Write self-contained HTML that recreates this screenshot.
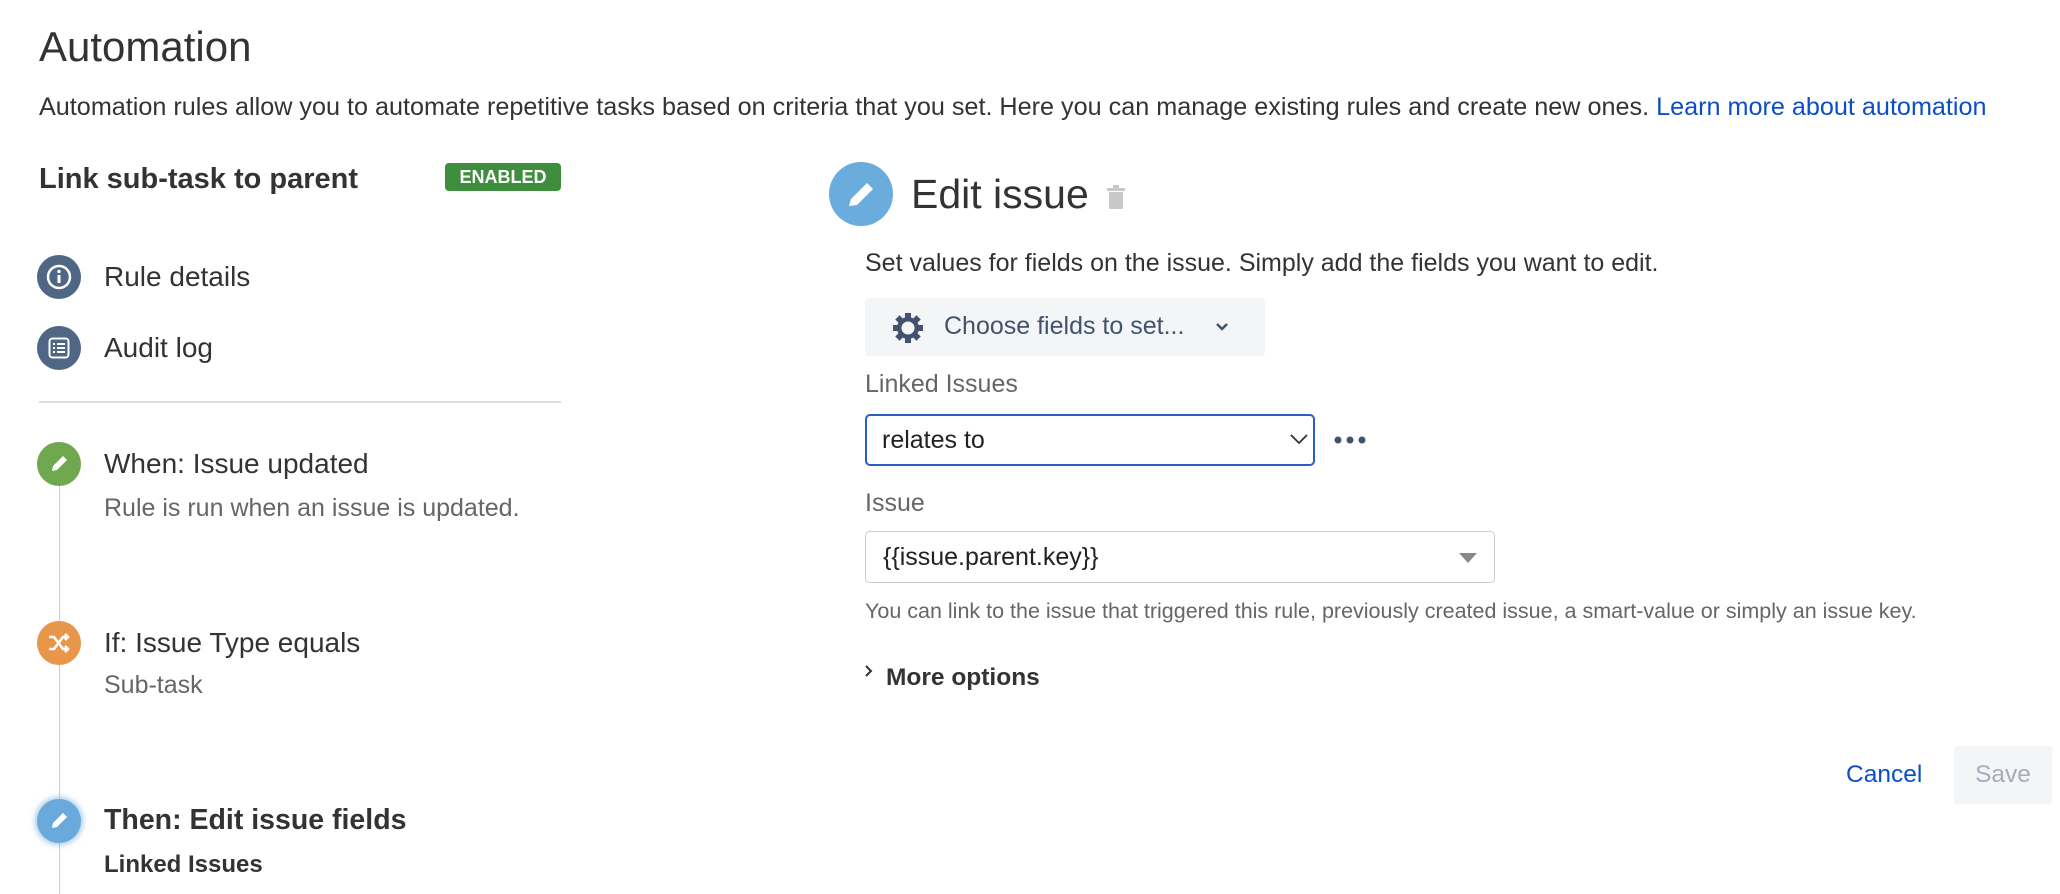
<!DOCTYPE html>
<html><head><meta charset="utf-8"><style>
*{margin:0;padding:0;box-sizing:border-box}
body{width:2060px;height:894px;background:#fff;font-family:"Liberation Sans",Arial,sans-serif;color:#333;position:relative;overflow:hidden}
.a{position:absolute;white-space:nowrap}
.circ{position:absolute;border-radius:50%}
</style></head><body>
<div class="a" style="left:39px;top:23px;font-size:42px;color:#333">Automation</div>
<div class="a" style="left:39px;top:93px;font-size:25.2px;color:#333">Automation rules allow you to automate repetitive tasks based on criteria that you set. Here you can manage existing rules and create new ones. <span style="color:#0b4fc8">Learn more about automation</span></div>

<div class="a" style="left:39px;top:163px;font-size:29px;font-weight:bold;color:#333">Link sub-task to parent</div>
<div class="a" style="left:445px;top:163px;width:116px;height:28px;background:#3e8e3e;border-radius:4px;color:#fff;font-weight:bold;font-size:18px;text-align:center;line-height:28px">ENABLED</div>

<div class="circ" style="left:37px;top:255px;width:44px;height:44px;background:#506685"></div>
<svg class="a" style="left:37px;top:255px" width="44" height="44"><circle cx="22" cy="22" r="11" fill="none" stroke="#fff" stroke-width="2.5"/><rect x="20.5" y="20" width="3" height="8" fill="#fff"/><circle cx="22" cy="16.5" r="1.7" fill="#fff"/></svg>
<div class="a" style="left:104px;top:261px;font-size:28px">Rule details</div>
<div class="circ" style="left:37px;top:326px;width:44px;height:44px;background:#506685"></div>
<svg class="a" style="left:37px;top:326px" width="44" height="44"><rect x="12.5" y="12.5" width="19" height="19" rx="3" fill="none" stroke="#fff" stroke-width="2"/><g fill="#fff"><rect x="16" y="17" width="2" height="2"/><rect x="20" y="17" width="8" height="2"/><rect x="16" y="21" width="2" height="2"/><rect x="20" y="21" width="8" height="2"/><rect x="16" y="25" width="2" height="2"/><rect x="20" y="25" width="8" height="2"/></g></svg>
<div class="a" style="left:104px;top:332px;font-size:28px">Audit log</div>
<div class="a" style="left:39px;top:401px;width:522px;height:2px;background:#ddd"></div>

<div class="a" style="left:59px;top:470px;width:1px;height:424px;background:#ccc"></div>
<div class="circ" style="left:37px;top:442px;width:44px;height:44px;background:#6fa84f"></div>
<svg class="a" style="left:37px;top:442px" width="44" height="44"><path d="M15 29 L16 24 L26 14 L30 18 L20 28 Z" fill="#fff"/></svg>
<div class="a" style="left:104px;top:448px;font-size:28px">When: Issue updated</div>
<div class="a" style="left:104px;top:494px;font-size:25px;color:#666">Rule is run when an issue is updated.</div>

<div class="circ" style="left:37px;top:621px;width:44px;height:44px;background:#e8964a"></div>
<svg class="a" style="left:37px;top:621px" width="44" height="44" fill="none" stroke="#fff" stroke-width="2.5"><path d="M12 16h5l9 12h5M12 28h5l9-12h5M28 13l3 3-3 3M28 25l3 3-3 3"/></svg>
<div class="a" style="left:104px;top:627px;font-size:28px">If: Issue Type equals</div>
<div class="a" style="left:104px;top:671px;font-size:25px;color:#666">Sub-task</div>

<div class="circ" style="left:37px;top:799px;width:44px;height:44px;background:#6aa9dc;box-shadow:0 0 6px 2px rgba(106,169,220,.6)"></div>
<svg class="a" style="left:37px;top:799px" width="44" height="44"><path d="M15 29 L16 24 L26 14 L30 18 L20 28 Z" fill="#fff"/></svg>
<div class="a" style="left:104px;top:804px;font-size:28.5px;font-weight:bold">Then: Edit issue fields</div>
<div class="a" style="left:104px;top:851px;font-size:24px;font-weight:bold">Linked Issues</div>

<div class="circ" style="left:829px;top:162px;width:64px;height:64px;background:#6aaddc"></div>
<svg class="a" style="left:829px;top:162px" width="64" height="64"><path d="M20 44 L22 37 L38 21 L44 27 L28 43 Z" fill="#fff"/></svg>
<div class="a" style="left:911px;top:171px;font-size:41px;color:#333">Edit issue</div>
<svg class="a" style="left:1106px;top:184px" width="20" height="26"><rect x="1" y="4" width="18" height="3" fill="#c8c8c8"/><rect x="7" y="1" width="6" height="3" fill="#c8c8c8"/><rect x="3" y="8" width="14" height="17" rx="1" fill="#c8c8c8"/></svg>
<div class="a" style="left:865px;top:249px;font-size:25px;color:#333">Set values for fields on the issue. Simply add the fields you want to edit.</div>

<div class="a" style="left:865px;top:298px;width:400px;height:58px;background:#f4f5f7;border-radius:4px"></div>
<svg class="a" style="left:892px;top:312px" width="32" height="32"><g fill="#42526e"><circle cx="16" cy="16" r="11"/><g transform="translate(16 16)"><rect x="-3" y="-15" width="6" height="30"/><rect x="-3" y="-15" width="6" height="30" transform="rotate(45)"/><rect x="-3" y="-15" width="6" height="30" transform="rotate(90)"/><rect x="-3" y="-15" width="6" height="30" transform="rotate(135)"/></g></g><circle cx="16" cy="16" r="6.5" fill="#f4f5f7"/></svg>
<div class="a" style="left:944px;top:312px;font-size:25px;color:#42526e">Choose fields to set...</div>
<svg class="a" style="left:1214px;top:321px" width="16" height="12"><path d="M3 3l5 5 5-5" fill="none" stroke="#42526e" stroke-width="2.5"/></svg>

<div class="a" style="left:865px;top:370px;font-size:25px;color:#666">Linked Issues</div>
<div class="a" style="left:865px;top:414px;width:450px;height:52px;border:2.5px solid #2c5cc5;border-radius:5px"></div>
<div class="a" style="left:882px;top:426px;font-size:25px;color:#222">relates to</div>
<svg class="a" style="left:1289px;top:432px" width="20" height="14"><path d="M2 3l8 8 8-8" fill="none" stroke="#333" stroke-width="1.8"/></svg>
<svg class="a" style="left:1332px;top:433px" width="38" height="14"><circle cx="6" cy="7" r="3.5" fill="#42526e"/><circle cx="18" cy="7" r="3.5" fill="#42526e"/><circle cx="30" cy="7" r="3.5" fill="#42526e"/></svg>

<div class="a" style="left:865px;top:489px;font-size:25px;color:#666">Issue</div>
<div class="a" style="left:865px;top:531px;width:630px;height:52px;border:1px solid #ccc;border-radius:5px"></div>
<div class="a" style="left:883px;top:543px;font-size:25px;color:#222">{{issue.parent.key}}</div>
<svg class="a" style="left:1458px;top:552px" width="20" height="12"><path d="M1 1h18l-9 10z" fill="#888"/></svg>
<div class="a" style="left:865px;top:599px;font-size:21.5px;color:#666">You can link to the issue that triggered this rule, previously created issue, a smart-value or simply an issue key.</div>

<svg class="a" style="left:864px;top:664px" width="10" height="14"><path d="M2 2l5 5-5 5" fill="none" stroke="#333" stroke-width="2"/></svg>
<div class="a" style="left:886px;top:664px;font-size:24.5px;font-weight:bold;color:#333">More options</div>

<div class="a" style="left:1846px;top:761px;font-size:24.5px;color:#0b4fc8">Cancel</div>
<div class="a" style="left:1954px;top:746px;width:98px;height:58px;background:#f4f5f7;border-radius:4px;color:#a5adba;font-size:24.5px;text-align:center;line-height:58px">Save</div>
</body></html>
